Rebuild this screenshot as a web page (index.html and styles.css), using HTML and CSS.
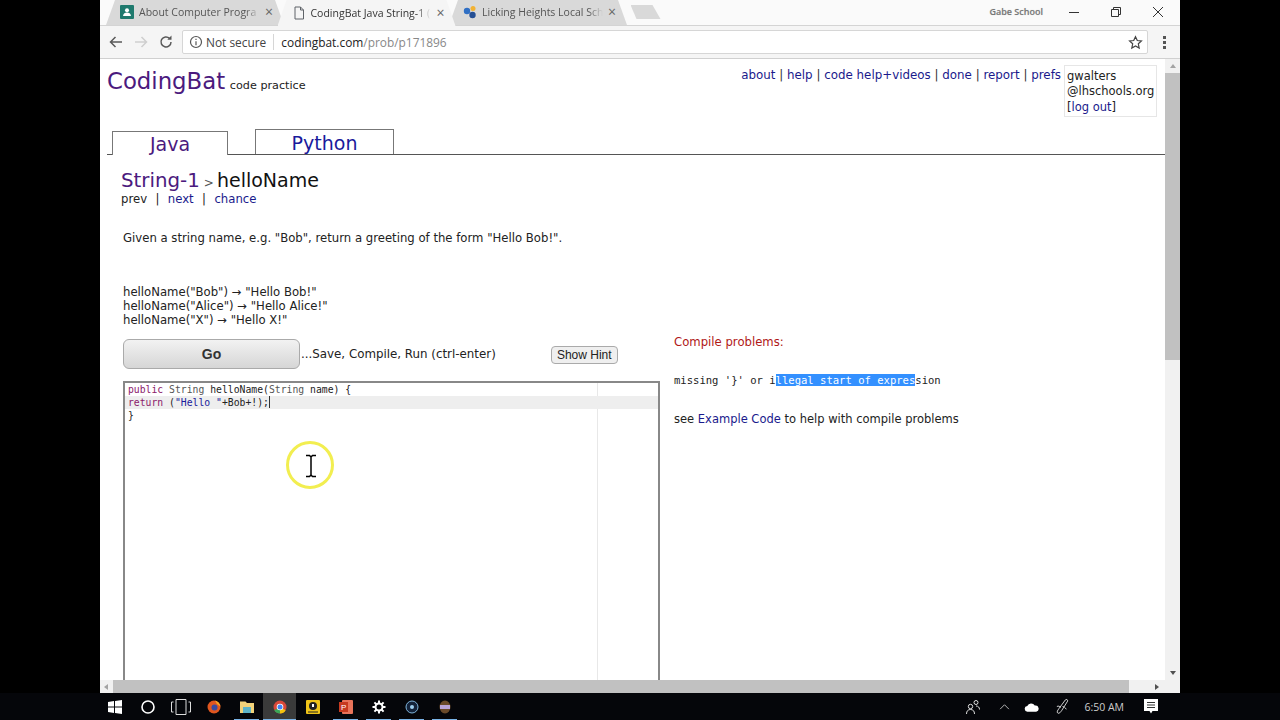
FILE: index.html
```html
<!DOCTYPE html>
<html lang="en">
  <head>
    <meta charset="UTF-8" />
    <meta name="viewport" content="width=device-width, initial-scale=1.0" />
    <title>CodingBat Java String-1 helloName</title>
    <link rel="stylesheet" href="styles.css">
  </head>
  <body>
    <div class="window">
      <div class="titlebar">
        <div class="tab">
          <svg class="favicon" viewBox="0 0 14 14"><rect width="14" height="14" rx="1" fill="#1f7a6e"/><circle cx="7" cy="5.2" r="2" fill="#fff"/><path d="M3 11c.4-2.4 2-3.4 4-3.4s3.600 1 4 3.400z" fill="#fff"/></svg>
          <span class="tab-title">About Computer Progra</span>
          <span class="tab-close">×</span>
        </div>
        <div class="tab active">
          <svg class="favicon" viewBox="0 0 14 14"><path d="M3 1h5.500L11.500 4v9H3zM8.500 1v3h3" fill="none" stroke="#5f6368" stroke-width="1"/></svg>
          <span class="tab-title">CodingBat Java String-1 (</span>
          <span class="tab-close">×</span>
        </div>
        <div class="tab">
          <svg class="favicon" viewBox="0 0 14 14"><circle cx="4" cy="6" r="3.200" fill="#2f6fc4"/><circle cx="10" cy="3.500" r="2.500" fill="#f2b233"/><circle cx="9.500" cy="10" r="3.200" fill="#254f94"/></svg>
          <span class="tab-title">Licking Heights Local Sch</span>
          <span class="tab-close">×</span>
        </div>
        <div class="new-tab"></div>
        <div class="profile">Gabe School</div>
        <div class="win-controls">
          <svg viewBox="0 0 10 10"><path d="M0 5.500h10" stroke="#333" fill="none"/></svg>
          <svg viewBox="0 0 10 10"><path d="M.5 2.500h7v7h-7zM2.500 2.500v-2h7v7h-2" stroke="#333" fill="none"/></svg>
          <svg viewBox="0 0 10 10"><path d="M0 0l10 10M10 0L0 10" stroke="#333" fill="none"/></svg>
        </div>
      </div>

      <div class="toolbar">
        <svg class="tool-icon" viewBox="0 0 16 16"><path d="M14 8H3M7.500 3L2.500 8l5 5" fill="none" stroke="#5a5a5a" stroke-width="1.500"/></svg>
        <svg class="tool-icon" viewBox="0 0 16 16"><path d="M2 8h11M8.500 3l5 5-5 5" fill="none" stroke="#cfcfcf" stroke-width="1.500"/></svg>
        <svg class="tool-icon" viewBox="0 0 16 16"><path d="M13 8a5 5 0 1 1-1.500-3.600" fill="none" stroke="#5a5a5a" stroke-width="1.500"/><path d="M13.500 1.500v4.200H9.300z" fill="#5a5a5a"/></svg>
        <div class="omnibox">
          <svg class="info-icon" viewBox="0 0 14 14"><circle cx="7" cy="7" r="5.500" fill="none" stroke="#555" stroke-width="1.200"/><path d="M7 6.200v4M7 3.800v1.300" stroke="#555" stroke-width="1.200"/></svg>
          <span class="secure">Not secure</span>
          <span class="url">codingbat.com<span class="url-path">/prob/p171896</span></span>
          <svg class="star" viewBox="0 0 16 16"><path d="M8 1.800l1.900 4.100 4.400.5-3.300 3 .9 4.400L8 11.600l-3.900 2.200.9-4.400-3.300-3 4.400-.5z" fill="none" stroke="#444" stroke-width="1.300"/></svg>
        </div>
        <div class="menu-dots"><i></i><i></i><i></i></div>
      </div>

      <div class="viewport">
        <div class="page">
          <div class="header">
            <div class="brand">
              <a class="logo">CodingBat</a>
              <span class="tagline">code practice</span>
            </div>
            <div class="nav">
              <a>about</a> | <a>help</a> | <a>code help+videos</a> | <a>done</a> | <a>report</a> | <a>prefs</a>
            </div>
            <div class="account">
              gwalters<br />
              @lhschools.org
              <div class="logout">[<a>log out</a>]</div>
            </div>
          </div>

          <div class="lang-tabs">
            <div class="lang current">Java</div>
            <div class="lang other">Python</div>
          </div>

          <div class="problem">
            <div class="crumb">
              <a class="section">String-1</a>
              <span class="gt">&gt;</span>
              <span class="name">helloName</span>
            </div>
            <div class="pager">prev &nbsp;|&nbsp; <a>next</a> &nbsp;|&nbsp; <a>chance</a></div>

            <p class="desc">Given a string name, e.g. "Bob", return a greeting of the form "Hello Bob!".</p>

            <div class="examples">
              helloName("Bob") → "Hello Bob!"<br />
              helloName("Alice") → "Hello Alice!"<br />
              helloName("X") → "Hello X!"
            </div>

            <div class="work">
              <div class="left">
                <div class="actions">
                  <button class="go">Go</button>
                  <span class="go-note">...Save, Compile, Run (ctrl-enter)</span>
                  <button class="hint">Show Hint</button>
                </div>
                <div class="editor">
                  <div class="code-line"><span class="kw">public</span> <span class="ty">String</span> helloName(<span class="ty">String</span> name) {</div>
                  <div class="code-line current-line"><span class="kw">return</span> (<span class="str">"Hello "</span>+Bob+!);<span class="caret"></span></div>
                  <div class="code-line">}</div>
                </div>
              </div>
              <div class="results">
                <div class="problems-title">Compile problems:</div>
                <div class="error-msg">missing '}' or i<span class="selected">llegal start of expres</span>sion</div>
                <div class="see">see <a>Example Code</a> to help with compile problems</div>
              </div>
            </div>
          </div>

          <div class="cursor-ring">
            <svg viewBox="0 0 12 24"><path d="M1 1.500h3.500L6 3l1.500-1.500H11M6 3v18M1 22.500h3.500L6 21l1.500 1.500H11" fill="none" stroke="#000" stroke-width="1.500"/></svg>
          </div>
        </div>

        <div class="vscroll">
          <div class="arrow-up"></div>
          <div class="vthumb"></div>
          <div class="arrow-down"></div>
        </div>
      </div>

      <div class="hscroll">
        <div class="arrow-left"></div>
        <div class="hthumb"></div>
        <div class="arrow-right"></div>
      </div>
    </div>

    <div class="taskbar">
      <div class="task-item">
        <svg viewBox="0 0 14 14"><path d="M0 2l6-.9v5.400H0zM7 1l7-1v6.500H7zM0 7.500h6v5.400l-6-.9zM7 7.500h7V14l-7-1z" fill="#fff"/></svg>
      </div>
      <div class="task-item">
        <svg viewBox="0 0 14 14"><circle cx="7" cy="7" r="6" fill="none" stroke="#fff" stroke-width="1.600"/></svg>
      </div>
      <div class="task-item">
        <svg class="wide" viewBox="0 0 20 16"><path d="M5 .5h10v15H5zM2.500 3H.5v10h2M17.500 3h2v10h-2" fill="none" stroke="#ddd"/></svg>
      </div>
      <div class="task-item">
        <svg viewBox="0 0 14 14"><circle cx="7" cy="7" r="6.500" fill="#e0561f"/><circle cx="7.500" cy="7.500" r="3" fill="#3a4aa0"/><path d="M8 .5c2.500.5 5 3 5.500 6L10 4z" fill="#f6a623"/></svg>
      </div>
      <div class="task-item open">
        <svg viewBox="0 0 14 14"><path d="M0 1.500h5.500L7 3h7v10H0z" fill="#f1d27a"/><rect x="3" y="7" width="8" height="6" fill="#5db4c9"/></svg>
      </div>
      <div class="task-item running">
        <svg viewBox="0 0 14 14"><circle cx="7" cy="7" r="6.500" fill="#d8483a"/><path d="M7 7L1.300 10.300A6.500 6.500 0 0 0 7 13.500z" fill="#3aa757"/><path d="M7 7l5.700 3.300A6.500 6.500 0 0 1 7 13.500z" fill="#f4c20d"/><circle cx="7" cy="7" r="3.300" fill="#fff"/><circle cx="7" cy="7" r="2.500" fill="#4285f4"/></svg>
      </div>
      <div class="task-item">
        <svg viewBox="0 0 14 14"><rect width="14" height="14" rx="1" fill="#f0c419"/><circle cx="7" cy="6" r="4" fill="#222"/><path d="M6 4h2v3H6z" fill="#fff"/><path d="M2 12h10" stroke="#222"/></svg>
      </div>
      <div class="task-item open">
        <svg viewBox="0 0 14 14"><rect x="3" y="0" width="11" height="14" rx="1" fill="#e8735a"/><rect x="0" y="2" width="9" height="10" fill="#c6391f"/><text x="2" y="10" font-size="8" font-family="Liberation Sans" fill="#fff">P</text></svg>
      </div>
      <div class="task-item open">
        <svg viewBox="0 0 14 14"><circle cx="7" cy="7" r="3.500" fill="none" stroke="#fff" stroke-width="2"/><path d="M7 .5v3M7 10.500v3M.5 7h3M10.500 7h3M2.400 2.400l2.100 2.100M9.500 9.500l2.100 2.100M11.600 2.400L9.500 4.500M4.500 9.500l-2.100 2.100" stroke="#fff" stroke-width="2"/></svg>
      </div>
      <div class="task-item open">
        <svg viewBox="0 0 14 14"><circle cx="7" cy="7" r="6" fill="#14233a" stroke="#7fb4dc"/><circle cx="7" cy="7" r="2" fill="#9fd0f0"/></svg>
      </div>
      <div class="task-item open">
        <svg viewBox="0 0 14 14"><ellipse cx="7" cy="7" rx="5.500" ry="6.500" fill="#6a4a2a"/><rect x="2" y="5" width="10" height="4" fill="#b9a4d8"/></svg>
      </div>

      <div class="tray">
        <svg class="tray-people" viewBox="0 0 16 16"><g fill="none" stroke="#ddd"><circle cx="5.500" cy="7.500" r="2.200"/><path d="M1.500 15c0-3 1.500-4.500 4-4.500s4 1.500 4 4.500"/><circle cx="11" cy="3.500" r="2"/><path d="M11 7c2.200 0 3.500 1.300 3.500 3.500"/></g></svg>
        <svg class="tray-chevron" viewBox="0 0 12 8"><path d="M1 7l5-5 5 5" fill="none" stroke="#ccc"/></svg>
        <svg class="tray-cloud" viewBox="0 0 16 10"><path d="M4 10a3 3 0 0 1-.5-6A4.500 4.500 0 0 1 11.500 3.500 3.300 3.300 0 0 1 13 10z" fill="#fff"/></svg>
        <svg class="tray-pen" viewBox="0 0 16 18"><path d="M3 16c-1.500-1 0-3 1-4.500L11 2c1-1.200 3-.2 2.500 1.200L7 13.500C5.800 15 4.500 17 3 16zM2 9c2-1 3 0 4 1M8 9c1.500 0 3 1 4 3" fill="none" stroke="#ddd"/></svg>
        <div class="clock">6:50 AM</div>
        <svg class="tray-notify" viewBox="0 0 14 15"><path d="M0 0h14v12H8.500L7 14.500 5.500 12H0z" fill="#fff"/><path d="M3 3.500h8M3 6h8M3 8.500h8" stroke="#333"/></svg>
      </div>
    </div>
  </body>
</html>
```

FILE: styles.css
```css
*,
*::before,
*::after {
  box-sizing: border-box;
  margin: 0;
  padding: 0;
}

body {
  background-color: #000;
  width: 100%;
  height: 100vh;
  overflow: hidden;
  display: flex;
  flex-direction: column;
  font-family: "DejaVu Sans", Verdana, sans-serif;
}

a {
  color: #1a1a8c;
}

.window {
  width: 1080px;
  height: 693px;
  margin-left: 100px;
  background-color: #fff;
  display: flex;
  flex-direction: column;
}

/* tab strip */
.titlebar {
  height: 26px;
  flex-shrink: 0;
  display: flex;
  align-items: flex-end;
  background-color: #fafafa;
  border-bottom: 1px solid #d4d4d4;
  padding-left: 6px;
  font-family: "Open Sans", sans-serif;
  font-size: 10.500px;
  color: #555;
}

.tab {
  width: 178px;
  height: 25px;
  margin-right: -6.500px;
  padding: 0 11px 1px 14px;
  display: flex;
  align-items: center;
  gap: 5px;
  background-color: #d9d9d9;
  clip-path: polygon(0 100%, 9px 0, calc(100% - 9px) 0, 100% 100%);
}

.tab.active {
  position: relative;
  z-index: 1;
  height: 26px;
  margin-bottom: -1px;
  background-color: #f5f5f5;
  color: #333;
}

.favicon {
  width: 14px;
  height: 14px;
  flex-shrink: 0;
}

.tab-title {
  flex: 1;
  white-space: nowrap;
  overflow: hidden;
  -webkit-mask-image: linear-gradient(to right, #000 88%, transparent 100%);
  mask-image: linear-gradient(to right, #000 88%, transparent 100%);
}

.tab-close {
  font-size: 14px;
  line-height: 1;
  color: #666;
}

.new-tab {
  width: 30px;
  height: 14px;
  margin: 0 0 6px 10px;
  background-color: #d9d9d9;
  clip-path: polygon(0 0, 22px 0, 100% 100%, 6px 100%);
}

.profile {
  margin-left: auto;
  margin-right: 26px;
  align-self: flex-start;
  padding-top: 5px;
  font-size: 9px;
  font-weight: 600;
  color: #777;
  text-shadow: 0 0 1px #ccc;
}

.win-controls {
  align-self: flex-start;
  display: flex;
  gap: 32px;
  padding: 7px 17px 0 0;
}

.win-controls svg {
  width: 10px;
  height: 10px;
}

/* address bar */
.toolbar {
  height: 33px;
  flex-shrink: 0;
  display: flex;
  align-items: center;
  gap: 9px;
  padding: 0 11px 0 8px;
  background-color: #f5f5f5;
  border-bottom: 1px solid #d0d0d0;
}

.tool-icon {
  width: 16px;
  height: 16px;
  flex-shrink: 0;
}

.omnibox {
  flex: 1;
  height: 24px;
  margin-left: -1px;
  display: flex;
  align-items: center;
  background-color: #fff;
  border: 1px solid #d6d6d6;
  border-radius: 2px;
  padding: 0 4px 0 6px;
  font-family: "Open Sans", sans-serif;
  font-size: 11.900px;
}

.info-icon {
  width: 14px;
  height: 14px;
  margin-right: 3px;
}

.secure {
  color: #444;
  padding-right: 7px;
  border-right: 1px solid #d6d6d6;
  margin-right: 7px;
}

.url {
  color: #222;
}

.url-path {
  color: #888;
}

.star {
  width: 15px;
  height: 15px;
  margin-left: auto;
}

.menu-dots {
  display: flex;
  flex-direction: column;
  gap: 2px;
  margin: 0 3px 0 6px;
}

.menu-dots i {
  width: 3px;
  height: 3px;
  background-color: #555;
}

/* page */
.viewport {
  flex: 1;
  min-height: 0;
  display: flex;
}

.page {
  flex: 1;
  position: relative;
  overflow: hidden;
  font-size: 11.680px;
  color: #222;
}

.header {
  display: flex;
  align-items: flex-start;
  padding: 6px 8px 0 7px;
}

.brand {
  flex: 1;
  padding-top: 3px;
}

.logo {
  font-size: 22.800px;
  color: #4b1a7e;
}

.tagline {
  font-size: 11.200px;
  margin-left: 1px;
}

.nav {
  padding-top: 3px;
  margin-right: 3px;
  font-size: 11.870px;
  color: #333;
}

.account {
  width: 93px;
  height: 52px;
  padding: 3px 0 0 2px;
  border: 1px solid #e6e6e6;
  font-size: 11.500px;
  line-height: 15px;
  white-space: nowrap;
}

.logout {
  margin-top: 1px;
}

.lang-tabs {
  height: 38px;
  margin-left: 7px;
  padding-left: 5px;
  display: flex;
  align-items: flex-end;
  gap: 27px;
  border-bottom: 1px solid #555;
  font-size: 19px;
}

.lang {
  border: 1px solid #777;
  border-bottom: 0;
  text-align: center;
}

.lang.current {
  width: 116px;
  height: 24px;
  margin-bottom: -1px;
  background-color: #fff;
  color: #4b1a7e;
  line-height: 24px;
}

.lang.other {
  width: 139px;
  height: 25px;
  color: #1a1a9c;
  line-height: 27px;
}

.problem {
  padding: 13px 0 0 21px;
}

.crumb {
  font-size: 19px;
  line-height: 24px;
  color: #111;
}

.section {
  font-size: 19.800px;
  color: #4b1a7e;
}

.gt {
  margin: 0 -3px 0 -2px;
  font-size: 12px;
  color: #555;
}

.pager {
  line-height: 14px;
  margin-top: -3px;
  word-spacing: 0.500px;
}

.desc {
  margin: 25px 0 0 2px;
  line-height: 14px;
}

.examples {
  margin: 40px 0 0 2px;
  line-height: 14px;
}

.work {
  display: flex;
  margin: 12px 0 0 2px;
  gap: 14px;
}

.left {
  width: 537px;
  flex-shrink: 0;
}

.actions {
  height: 30px;
  display: flex;
  align-items: center;
}

.go {
  width: 177px;
  height: 30px;
  border: 1px solid #aaa;
  border-radius: 6px;
  background: linear-gradient(#f2f2f2, #d6d6d6);
  font-family: "Liberation Sans", sans-serif;
  font-size: 14px;
  font-weight: bold;
  color: #333;
}

.go-note {
  margin-left: 1px;
  font-size: 11.850px;
}

.hint {
  margin: 1px 0 0 55px;
  width: 67px;
  height: 18px;
  border: 1px solid #aaa;
  border-radius: 4px;
  background-color: #efefef;
  font-family: "Liberation Sans", sans-serif;
  font-size: 12px;
  color: #222;
}

.editor {
  position: relative;
  height: 400px;
  margin-top: 12px;
  border: 2px solid #888;
  background: linear-gradient(#e8e8e8, #e8e8e8) 472px 0 / 1px 100% no-repeat;
  font-family: "DejaVu Sans Mono", monospace;
  font-size: 9.750px;
  color: #222;
}

.code-line {
  height: 13px;
  line-height: 13px;
  padding-left: 3px;
  white-space: pre;
}

.current-line {
  background-color: #eee;
}

.kw {
  color: #8b1a6b;
}

.ty {
  color: #555;
}

.str {
  color: #1a1a9c;
}

.caret {
  display: inline-block;
  width: 1px;
  height: 12px;
  vertical-align: top;
  background-color: #333;
}

.results {
  flex: 1;
}

.problems-title {
  color: #b01818;
  line-height: 14px;
  margin-top: -4px;
}

.error-msg {
  margin-top: 24px;
  font-family: "DejaVu Sans Mono", monospace;
  font-size: 10.560px;
  line-height: 14px;
}

.selected {
  background-color: #3390ff;
  color: #fff;
}

.see {
  margin-top: 25px;
  font-size: 11.500px;
  line-height: 14px;
}

.cursor-ring {
  position: absolute;
  left: 186px;
  top: 382px;
  width: 48px;
  height: 48px;
  border: 3px solid #f2ee50;
  border-radius: 50%;
  display: flex;
  align-items: center;
  justify-content: center;
}

.cursor-ring svg {
  width: 12px;
  height: 24px;
  margin: 1px 0 0 1px;
}

/* scrollbars */
.vscroll {
  width: 15px;
  flex-shrink: 0;
  display: flex;
  flex-direction: column;
  align-items: center;
  background-color: #f1f1f1;
}

.arrow-up,
.arrow-down {
  width: 0;
  height: 0;
  border-left: 3px solid transparent;
  border-right: 3px solid transparent;
}

.arrow-up {
  margin-top: 5px;
  border-bottom: 4px solid #a3a3a3;
}

.vthumb {
  width: 100%;
  height: 287px;
  margin-top: 5px;
  background-color: #c1c1c1;
}

.arrow-down {
  margin-top: auto;
  margin-bottom: 5px;
  border-top: 4px solid #505050;
}

.hscroll {
  height: 13px;
  flex-shrink: 0;
  display: flex;
  align-items: center;
  background-color: #f1f1f1;
}

.arrow-left,
.arrow-right {
  width: 0;
  height: 0;
  border-top: 3px solid transparent;
  border-bottom: 3px solid transparent;
}

.arrow-left {
  margin-left: 4px;
  border-right: 4px solid #a3a3a3;
}

.hthumb {
  width: 1016px;
  height: 100%;
  margin-left: 5px;
  background-color: #c1c1c1;
}

.arrow-right {
  margin-left: 26px;
  border-left: 4px solid #505050;
}

/* taskbar */
.taskbar {
  flex: 1;
  display: flex;
  align-items: stretch;
  padding-left: 98px;
  background-color: #05060a;
}

.task-item {
  width: 33px;
  display: flex;
  align-items: center;
  justify-content: center;
}

.task-item svg {
  width: 14px;
  height: 14px;
}

.task-item svg.wide {
  width: 20px;
  height: 16px;
}

.task-item.open {
  background: linear-gradient(#7ab4e8, #7ab4e8) center bottom / 25px 1px no-repeat;
}

.task-item.running {
  background-color: #3a3a3a;
  box-shadow: inset 0 -1px 0 #7ab4e8;
}

.tray {
  flex: 1;
  display: flex;
  align-items: center;
  justify-content: flex-end;
  padding-right: 122px;
  color: #ccc;
}

.tray-people {
  width: 16px;
  height: 16px;
  margin-right: 18px;
}

.tray-chevron {
  width: 11px;
  height: 7px;
  margin-right: 14px;
}

.tray-cloud {
  width: 15px;
  height: 10px;
  margin-right: 16px;
}

.tray-pen {
  width: 15px;
  height: 17px;
  margin-right: 14px;
}

.clock {
  font-family: "Open Sans", sans-serif;
  font-size: 10.500px;
  margin-right: 20px;
}

.tray-notify {
  width: 14px;
  height: 15px;
}
```
